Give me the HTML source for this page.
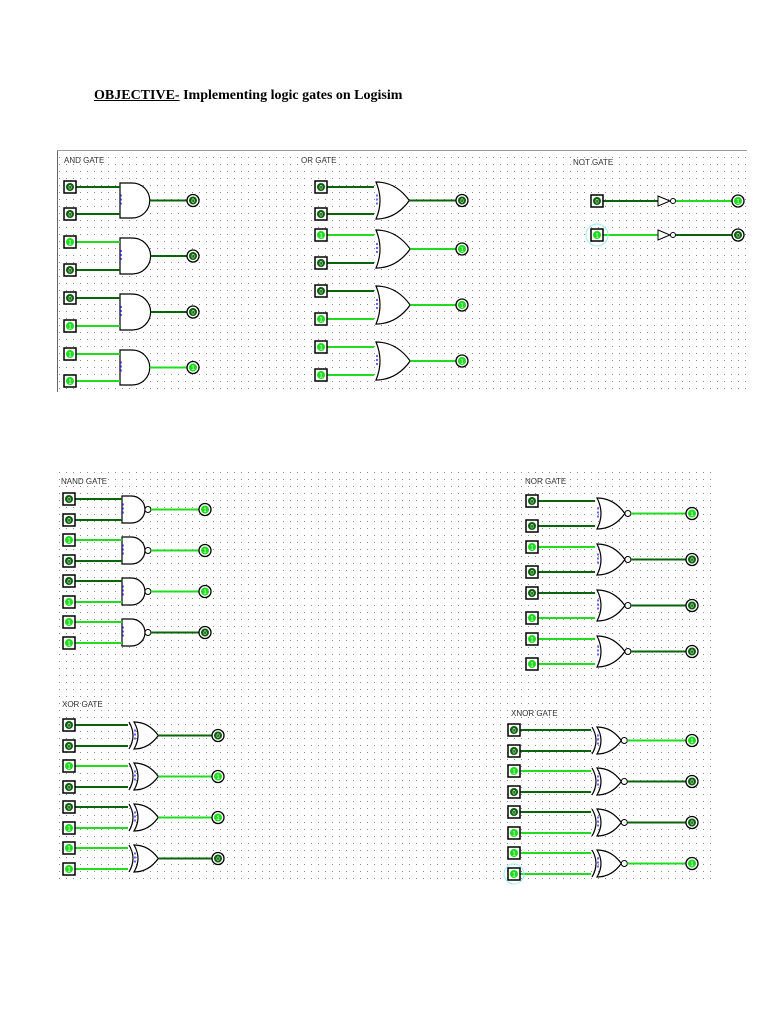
<!DOCTYPE html>
<html><head><meta charset="utf-8"><style>
html,body{margin:0;padding:0;background:#fff;width:768px;height:1024px;overflow:hidden}
.t{position:absolute;left:94px;top:88px;font:bold 14px "Liberation Serif",serif;color:#000}
.t u{text-decoration:underline}
svg{position:absolute;left:0;top:0}
</style></head><body>
<div class="t"><u>OBJECTIVE-</u> Implementing logic gates on Logisim</div>
<svg id="s" width="768" height="1024" xmlns="http://www.w3.org/2000/svg">
<defs>
<pattern id="g" x="0" y="0" width="7" height="7" patternUnits="userSpaceOnUse"><rect x="3" y="3" width="1" height="1" fill="#888"/></pattern>
</defs>
<rect x="57" y="150" width="690" height="242" fill="url(#g)"/>
<line x1="57.5" y1="150" x2="57.5" y2="392" stroke="#666"/>
<line x1="57" y1="150.5" x2="747" y2="150.5" stroke="#999"/>
<rect x="55" y="470" width="657" height="415" fill="url(#g)"/>
<g font-family="Liberation Sans,sans-serif" font-size="8" fill="#333">
<text x="64" y="163">AND GATE</text>
<text x="301" y="163">OR GATE</text>
<text x="573" y="165">NOT GATE</text>
<text x="61" y="484">NAND GATE</text>
<text x="525" y="484">NOR GATE</text>
<text x="62" y="707">XOR GATE</text>
<text x="511" y="716">XNOR GATE</text>
</g>
<g id="c"></g>
</svg>
<script>
var D='#0a640a',B='#1fdc1f',o='';
function col(v){return v?B:D}
function inp(x,y,v){o+='<rect x="'+(x-6)+'" y="'+(y-6)+'" width="12" height="12" fill="#fff" stroke="#000" stroke-width="1.5"/><circle cx="'+x+'" cy="'+y+'" r="4" fill="'+col(v)+'"/><text x="'+x+'" y="'+(y+2.5)+'" font-size="6" text-anchor="middle" fill="#fff" font-family="Liberation Sans,sans-serif">'+v+'</text>';}
function out(x,y,v){o+='<circle cx="'+x+'" cy="'+y+'" r="6" fill="#fff" stroke="#000" stroke-width="1.3"/><circle cx="'+x+'" cy="'+y+'" r="4" fill="'+col(v)+'"/><text x="'+x+'" y="'+(y+2.5)+'" font-size="6" text-anchor="middle" fill="#fff" font-family="Liberation Sans,sans-serif">'+v+'</text>';}
function w(x1,y1,x2,y2,v){o+='<line x1="'+x1+'" y1="'+y1+'" x2="'+x2+'" y2="'+y2+'" stroke="'+col(v)+'" stroke-width="2"/>';}
function gate(t,gx,y1,y2,ix,ox,a,b,pad){
 var cy=(y1+y2)/2,h=(y2-y1)+pad*2,top=cy-h/2,bot=cy+h/2,wd=h*0.85,r,tip;
 if(t=='and'||t=='nand'){r=a&&b;o+='<path d="M'+gx+','+top+'H'+(gx+wd-h/2)+'A'+h/2+','+h/2+' 0 0 1 '+(gx+wd-h/2)+','+bot+'H'+gx+'Z" fill="#fff" stroke="#000" stroke-width="1.2"/>';tip=gx+wd;}
 else{if(t=='xor'||t=='xnor'){o+='<path d="M'+(gx-5)+','+top+'Q'+(gx+3)+','+cy+' '+(gx-5)+','+bot+'" fill="none" stroke="#000" stroke-width="1.2"/>';}
 wd=h*0.9;o+='<path d="M'+gx+','+top+'Q'+(gx+wd*0.6)+','+top+' '+(gx+wd)+','+cy+'Q'+(gx+wd*0.6)+','+bot+' '+gx+','+bot+'Q'+(gx+8)+','+cy+' '+gx+','+top+'Z" fill="#fff" stroke="#000" stroke-width="1.2"/>';tip=gx+wd;
 r=(t=='or'||t=='nor')?(a||b):(a^b);}
 var ie=(t=='and'||t=='nand')?gx:gx-2;
 if(t=='xor'||t=='xnor')ie=gx-6;
 w(ix+6,y1,ie,y1,a);w(ix+6,y2,ie,y2,b);
 o+='<line x1="'+(gx+1)+'" y1="'+(cy-6)+'" x2="'+(gx+1)+'" y2="'+(cy+6)+'" stroke="#33f" stroke-width="1.5" stroke-dasharray="2,2"/>';
 inp(ix,y1,a);inp(ix,y2,b);
 if(t[0]=='n'||t=='xnor'){r=r?0:1;o+='<circle cx="'+(tip+3)+'" cy="'+cy+'" r="3" fill="#fff" stroke="#000"/>';tip+=6;}
 r=r?1:0;w(tip,cy,ox-6,cy,r);out(ox,cy,r);
}
var V=[[0,0],[1,0],[0,1],[1,1]];
[[187,214],[242,270],[298,326],[354,381]].forEach(function(p,i){gate('and',120,p[0],p[1],70,193,V[i][0],V[i][1],4)});
[[187,214],[235,263],[291,319],[347,375]].forEach(function(p,i){gate('or',376,p[0],p[1],321,462,V[i][0],V[i][1],5)});
[[201,0],[235,1]].forEach(function(p){var y=p[0],v=p[1];w(603,y,658,y,v);o+='<path d="M658,'+(y-5)+'L670,'+y+'L658,'+(y+5)+'Z" fill="#fff" stroke="#000"/><circle cx="673" cy="'+y+'" r="2.5" fill="#fff" stroke="#000"/>';w(676,y,732,y,1-v);inp(597,y,v);out(738,y,1-v);});
o+='<circle cx="597" cy="235" r="11" fill="none" stroke="#9ee" stroke-width="1"/>';
[[499,520],[540,561],[581,602],[622,643]].forEach(function(p,i){gate('nand',122,p[0],p[1],69,205,V[i][0],V[i][1],3)});
[[501,526],[547,572],[593,618],[639,664]].forEach(function(p,i){gate('nor',597,p[0],p[1],532,692,V[i][0],V[i][1],3)});
[[725,746],[766,787],[807,828],[848,869]].forEach(function(p,i){gate('xor',134,p[0],p[1],69,218,V[i][0],V[i][1],3)});
[[730,751],[771,792],[812,833],[853,874]].forEach(function(p,i){gate('xnor',597,p[0],p[1],514,692,V[i][0],V[i][1],3)});
o+='<circle cx="514" cy="874" r="10" fill="none" stroke="#9ee" stroke-width="1"/>';
document.getElementById('c').innerHTML=o;
</script>
</body></html>
